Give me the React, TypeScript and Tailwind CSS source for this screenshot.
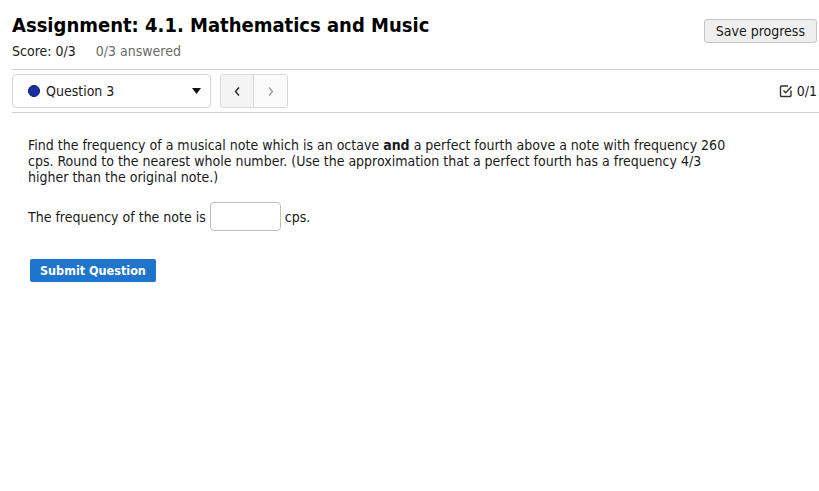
import React from "react";

const font = { fontFamily: '"DejaVu Sans Condensed", "Liberation Sans", sans-serif' };

const CheckIcon = () => (
  <svg width="14" height="14" viewBox="0 0 14 14" fill="none" stroke="#333" strokeWidth="1.4">
    <path d="M12 6.5V11.5a1 1 0 0 1-1 1H2.5a1 1 0 0 1-1-1V3a1 1 0 0 1 1-1H9" />
    <path d="M4.5 6.5l2.2 2.3L12.5 2.5" />
  </svg>
);

export default function App() {
  return (
    <div className="min-h-screen bg-white text-[#1a1a1a]" style={font}>
      {/* Header */}
      <div className="flex items-start justify-between pl-3 pr-[2px] pt-[10px]">
        <div>
          <h1 className="text-[20px] font-bold leading-[30px] text-black">
            Assignment: 4.1. Mathematics and Music
          </h1>
          <div className="mt-[2px] flex gap-5 text-[14px] leading-[18px]">
            <span>Score: 0/3</span>
            <span className="text-[#6b6b6b]">0/3 answered</span>
          </div>
        </div>
        <button className="mt-[9px] h-[24px] rounded-[3px] border border-[#c4c4c4] bg-[#efefef] px-[11px] text-[14px] leading-[20px] text-[#1a1a1a]">
          Save progress
        </button>
      </div>

      {/* Question nav */}
      <div className="ml-3 mt-[9px] flex items-center justify-between border-y border-[#cfcfcf] py-1 pr-[2px]">
        <div className="flex items-center gap-[9px]">
          <div className="flex h-[34px] w-[199px] items-center rounded-[4px] border border-[#d4d4d4] pl-[15px] pr-[9px] text-[14px]">
            <span className="h-[12px] w-[12px] rounded-full border border-[#0a1a6e] bg-[#1a2fa0]" />
            <span className="ml-[6px] flex-1">Question 3</span>
            <svg width="9" height="6" viewBox="0 0 9 6">
              <path d="M0 0h9L4.5 6z" fill="#111" />
            </svg>
          </div>
          <div className="flex h-[34px] overflow-hidden rounded-[3px] border border-[#d8d8d8]">
            <div className="flex w-[33px] items-center justify-center border-r border-[#d8d8d8] bg-[#f4f4f4]">
              <svg width="8" height="11" viewBox="0 0 8 11" fill="none" stroke="#222" strokeWidth="1.4">
                <path d="M6 1.5L2.5 5.5 6 9.5" />
              </svg>
            </div>
            <div className="flex w-[33px] items-center justify-center bg-[#fbfbfb]">
              <svg width="8" height="11" viewBox="0 0 8 11" fill="none" stroke="#999" strokeWidth="1.2">
                <path d="M2 1.5l3.5 4-3.5 4" />
              </svg>
            </div>
          </div>
        </div>
        <div className="flex items-center gap-[4px] text-[14px]">
          <CheckIcon />
          <span>0/1</span>
        </div>
      </div>

      {/* Question body */}
      <div className="px-[28px] pt-[24px] text-[14px] leading-[16px]">
        <p className="max-w-[700px]">
          Find the frequency of a musical note which is an octave <b>and</b> a perfect fourth above a note with frequency 260
          cps. Round to the nearest whole number. (Use the approximation that a perfect fourth has a frequency 4/3
          higher than the original note.)
        </p>
        <div className="mt-[17px] flex items-center gap-[4px]">
          <span>The frequency of the note is</span>
          <span className="h-[29px] w-[71px] rounded-[4px] border border-[#bdbdbd]" />
          <span>cps.</span>
        </div>
        <button className="ml-[2px] mt-[28px] h-[23px] rounded-[2px] bg-[#1f75cb] px-[10px] text-[12.5px] font-bold leading-[23px] text-white">
          Submit Question
        </button>
      </div>
    </div>
  );
}
